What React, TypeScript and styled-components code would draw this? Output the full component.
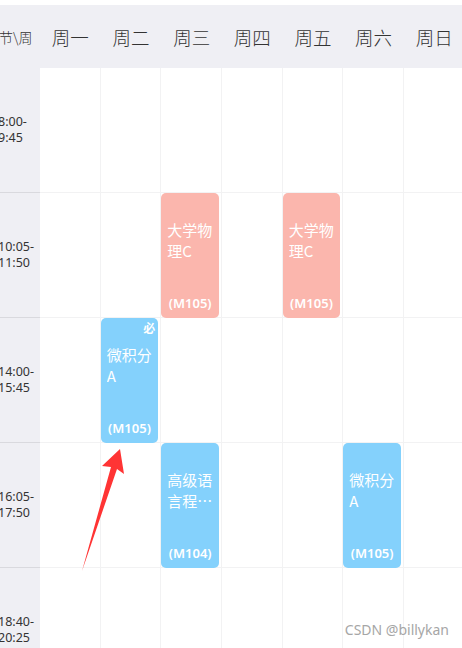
import React from "react";
import styled, { createGlobalStyle } from "styled-components";

const GlobalStyle = createGlobalStyle`
  html, body { margin: 0; padding: 0; background: #ffffff; overflow: hidden; }
  body { font-family: "Noto Sans", "Noto Sans CJK SC", sans-serif; }
`;

const COLS = "40px repeat(7, 60.67px)";

const Page = styled.div`
  position: relative;
  width: 462px;
  height: 648px;
  overflow: hidden;
  padding-top: 5px;
  box-sizing: border-box;
  background: #ffffff;
`;

const Header = styled.div`
  display: grid;
  grid-template-columns: ${COLS};
  height: 63px;
  background: #efeff4;
  align-items: center;
`;

const Corner = styled.div`
  font-size: 14px;
  font-weight: 300;
  color: #333;
  font-family: "Noto Sans CJK SC", sans-serif;
  white-space: nowrap;
  margin-left: -1px;
`;

const DayLabel = styled.div`
  font-size: 18.5px;
  font-weight: 300;
  color: #333;
  text-align: center;
  font-family: "Noto Sans CJK SC", sans-serif;
  white-space: nowrap;
`;

const Body = styled.div`
  display: grid;
  grid-template-columns: ${COLS};
  grid-auto-rows: 125px;
`;

const TimeCell = styled.div`
  background: #efeff4;
  border-bottom: 1px solid #d9d9de;
  box-sizing: border-box;
  display: flex;
  flex-direction: column;
  justify-content: center;
  font-size: 12.5px;
  line-height: 16px;
  color: #333;
  margin-left: -2px;
  white-space: nowrap;
`;

const DayCell = styled.div`
  border-right: 1.5px solid #f2f2f3;
  border-bottom: 1.5px solid #f2f2f3;
  box-sizing: border-box;
  display: flex;
  padding-right: 2px;
  min-width: 0;
`;

const Card = styled.div<{ $color: string }>`
  position: relative;
  flex: 1;
  height: calc(100% + 1.5px);
  margin-top: -0.5px;
  background: ${(p) => p.$color};
  border-radius: 5px;
  box-sizing: border-box;
  padding: 26px 3px 6px 6px;
  display: flex;
  flex-direction: column;
  justify-content: space-between;
  color: #ffffff;
  min-width: 0;
`;

const CourseName = styled.div`
  font-family: "Noto Sans CJK SC", sans-serif;
  font-size: 15px;
  line-height: 21px;
  display: -webkit-box;
  -webkit-line-clamp: 2;
  -webkit-box-orient: vertical;
  overflow: hidden;
  word-break: break-all;
`;

const Room = styled.div`
  font-size: 13px;
  line-height: 18px;
  font-weight: 600;
  text-align: center;
  margin-left: -3px;
  white-space: nowrap;
`;

const Badge = styled.span`
  position: absolute;
  top: 2px;
  right: 3px;
  font-family: "Noto Sans CJK SC", sans-serif;
  font-size: 12px;
  font-weight: 700;
  line-height: 16px;
`;

const Arrow = styled.svg`
  position: absolute;
  left: 78px;
  top: 445px;
  width: 50px;
  height: 130px;
  pointer-events: none;
`;

const Watermark = styled.div`
  position: absolute;
  right: 13px;
  bottom: 9px;
  font-size: 14px;
  line-height: 18px;
  color: #a6a6a6;
  white-space: nowrap;
`;

type Course = { day: number; slot: number; name: string; room: string; color: string; must?: boolean };

const PINK = "#fbb6ad";
const BLUE = "#84d1fc";

const courses: Course[] = [
  { day: 3, slot: 2, name: "大学物理C", room: "(M105)", color: PINK },
  { day: 5, slot: 2, name: "大学物理C", room: "(M105)", color: PINK },
  { day: 2, slot: 3, name: "微积分A", room: "(M105)", color: BLUE, must: true },
  { day: 3, slot: 4, name: "高级语言程序设计", room: "(M104)", color: BLUE },
  { day: 6, slot: 4, name: "微积分A", room: "(M105)", color: BLUE },
];

const days = ["周一", "周二", "周三", "周四", "周五", "周六", "周日"];
const times = [
  ["8:00-", "9:45"],
  ["10:05-", "11:50"],
  ["14:00-", "15:45"],
  ["16:05-", "17:50"],
  ["18:40-", "20:25"],
];

export default function App() {
  return (
    <>
      <GlobalStyle />
      <Page>
        <Header>
          <Corner>节\周</Corner>
          {days.map((d) => (
            <DayLabel key={d}>{d}</DayLabel>
          ))}
        </Header>
        <Body>
          {times.map((t, i) => (
            <React.Fragment key={i}>
              <TimeCell>
                <span>{t[0]}</span>
                <span>{t[1]}</span>
              </TimeCell>
              {days.map((_, di) => {
                const c = courses.find((x) => x.day === di + 1 && x.slot === i + 1);
                return (
                  <DayCell key={di}>
                    {c && (
                      <Card $color={c.color}>
                        {c.must && <Badge>必</Badge>}
                        <CourseName>{c.name}</CourseName>
                        <Room>{c.room}</Room>
                      </Card>
                    )}
                  </DayCell>
                );
              })}
            </React.Fragment>
          ))}
        </Body>
        <Arrow viewBox="0 0 50 130">
          <polygon points="42,4 46,29 39,24 4,126 33,22 24,21" fill="#ff3434" />
        </Arrow>
        <Watermark>CSDN @billykan</Watermark>
      </Page>
    </>
  );
}
